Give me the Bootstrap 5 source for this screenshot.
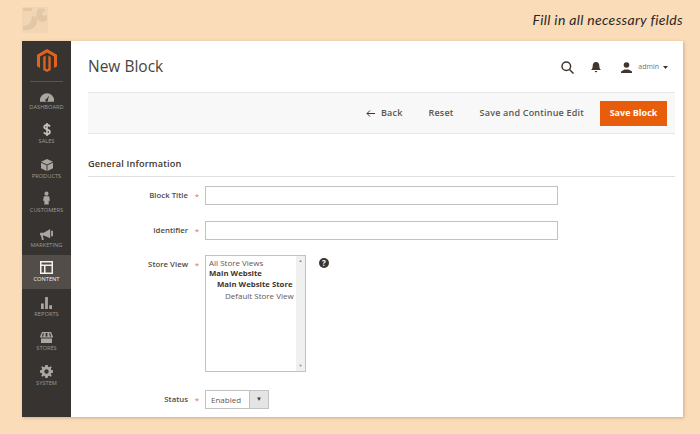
<!DOCTYPE html>
<html lang="en"><head><meta charset="utf-8"><title>New Block</title>
<link rel="stylesheet" href="https://cdn.jsdelivr.net/npm/bootstrap@5.3.0/dist/css/bootstrap.min.css">
<style>
html,body{height:434px;overflow:hidden}
body{background:#fadcb9;font-family:"Open Sans",sans-serif;color:#41362f;margin:0}
.topstrip{height:41px;padding:7px 17px 0 22px}
.wm{width:26px;height:26px;display:block}
.hand{font-family:"Lato",sans-serif;font-style:italic;font-size:14px;color:#2b2622;line-height:1;margin-top:6px;letter-spacing:.33px}
.appwin{margin-left:22px;width:661px;height:376px;background:#fff;box-shadow:1px 1px 3px rgba(120,90,50,.35)}
.side{width:49px;background:#373330;flex:none}
.brandbox{height:41px;padding-top:6px;margin:0 8px;border-bottom:1px solid #5a5551;text-align:center}
.navi{height:34.5px;color:#9f9b95;font-size:5.7px;line-height:8px;text-align:center;text-transform:uppercase;display:flex;flex-direction:column;align-items:center;justify-content:flex-end;padding-bottom:6px}
.navi svg{fill:#aaa6a0;margin-bottom:1px}
.navi.onn{background:#524d49;color:#f3f1ee}
.navi.onn svg{fill:#f3f1ee}
.mainp{padding:0 8px 0 17px;min-width:0}
.headrow{height:51px;padding-top:1px}
.pgtitle{font-size:15.5px;font-weight:400;color:#4a4340;margin:0;line-height:1}
.tools{padding-right:7px;font-size:7px;color:#7a716b}
.bell{margin:0 20px 0 17px}
.who{margin:0 4px 0 6px}
.actbar{height:42px;background:#f8f8f8;border-top:1px solid #e8e6e3;border-bottom:1px solid #e8e6e3;padding-right:8px;font-size:9px;font-weight:600;color:#5c5550;letter-spacing:.2px}
.backarr{margin-right:6px}
.gapact{margin-left:26px}
.savebtn{background:#e85d0c;color:#fff;width:67px;height:25px;border:0;border-radius:0;font-size:9px;font-weight:700;padding:0;margin-left:16px}
.secthead{font-size:9.2px;font-weight:600;margin:23px 0 0;padding-bottom:5px;border-bottom:1px solid #e1dfdc;line-height:14px;letter-spacing:.15px;color:#41362f}
.frow{display:flex;align-items:flex-start}
.rowa{margin-top:9px}.rowb{margin-top:16px}.rowc{margin-top:15px}.rowd{margin-top:18px}
.flbl{width:100px;text-align:right;font-size:7.8px;font-weight:600;color:#514a45;line-height:19px;flex:none}
.star{width:17px;height:19px;text-align:center;color:#e2705a;font-size:8px;line-height:19px;flex:none;padding-left:1px}
.finput{width:353px;height:19px;border:1px solid #c2c2c2;background:#fff}
.stores{width:101px;height:117px;border:1px solid #c2c2c2;font-size:8px;line-height:11px;padding:1px 0 0 3px;color:#5f5852;position:relative}
.stores b{font-weight:700;font-size:7.8px;color:#41362f;display:block}
.ind1{padding-left:8px}.ind2{padding-left:16px}
.scb{position:absolute;right:0;top:0;bottom:0;width:9px;background:#f0f0f0;color:#8a8a8a;font-size:4px;text-align:center;line-height:10px;display:flex;flex-direction:column;justify-content:space-between}
.hlp{width:10px;height:10px;border-radius:50%;background:#3a3532;color:#fff;font-size:8px;font-weight:700;text-align:center;line-height:10px;margin:3px 0 0 13px}
.seltxt{width:64px;height:19px;border:1px solid #c2c2c2;font-size:8px;line-height:17px;padding-left:5px;color:#5f5852;display:flex}
.selarr{margin-left:auto;width:19px;background:#e4e4e4;border-left:1px solid #c2c2c2;color:#41362f;font-size:6px;text-align:center;line-height:17px}
</style></head><body>
<div class="topstrip d-flex justify-content-between align-items-start">
<svg class="wm" viewBox="0 0 26 26"><rect width="26" height="26" fill="#f2d6b3"/><path d="M1 1h9v3H1zM10 9l5 1c1 5-1 12-9 13H1v-4c4 0 8-2 9-10z" fill="#e2c8a6"/><path d="M16 2c3-1 6 0 8 1l-4 3 1 3 4-1v5c-3 3-7 2-9 0-2-4-2-8 0-11z" fill="#e2c8a6"/></svg>
<div class="hand">Fill in all necessary fields</div>
</div>
<div class="appwin d-flex">
<nav class="side">
<div class="brandbox"><svg width="20" height="23" viewBox="0 0 20 23"><path d="M10 0 20 5.700V17.300L17 19V7.500L10 3.500 3 7.500V19L0 17.300V5.700Z" fill="#e2631e"/><path d="M10 23 6.300 21V7.900L8.600 6.600V19.600L10 20.400 11.400 19.600V6.600L13.700 7.900V21Z" fill="#e2631e"/></svg></div>
<div class="navi"><svg width="14" height="9" viewBox="0 0 18 11"><path d="M9 0a9 9 0 0 1 9 9v2H0V9a9 9 0 0 1 9-9zm3 3L8.500 7a1.800 1.800 0 1 0 1.700 1z"/></svg>Dashboard</div>
<div class="navi"><svg width="8" height="13" viewBox="0 0 8 13"><path d="M7 3.500C6.500 2.500 5.300 2 4 2 2.300 2 1.200 2.800 1.200 4.100 1.200 7 6.900 5.800 6.900 8.900 6.900 10.200 5.700 11 4 11 2.600 11 1.300 10.400.8 9.400" fill="none" stroke="#c6c2bd" stroke-width="1.800"/><path d="M3.200 0h1.600v13H3.200z" fill="#c6c2bd"/></svg>Sales</div>
<div class="navi"><svg width="12" height="12" viewBox="0 0 13 13"><path d="M6.500 0 13 3 6.500 6 0 3zM0 4l6 2.800V13L0 10zM13 4 7 6.800V13l6-3z"/></svg>Products</div>
<div class="navi"><svg width="7" height="14" viewBox="0 0 8 15"><circle cx="4" cy="2.500" r="2.300"/><path d="M1 5.500h6l1 5H6.500V15h-5v-4.500H0z"/></svg>Customers</div>
<div class="navi"><svg width="13" height="11" viewBox="0 0 14 12"><path d="M0 4h4L11 0v10L4 7H3l1 5H2L1 7H0zM12 2h2v6h-2z"/></svg>Marketing</div>
<div class="navi onn"><svg width="13" height="13" viewBox="0 0 13 13"><path fill-rule="evenodd" d="M0 0h13v13H0zM1.500 1.500V3.500h10V1.500zM1.500 5v6.500H4V5zM5.500 5v6.500h6V5z"/></svg>Content</div>
<div class="navi"><svg width="11" height="12" viewBox="0 0 12 13"><path d="M0 7h3v6H0zM4.500 0h3v13h-3zM9 9h3v4H9z"/></svg>Reports</div>
<div class="navi"><svg width="13" height="11" viewBox="0 0 14 12"><path fill-rule="evenodd" d="M2 0h10l2 5v1H0V5zM3 1 2 5h1.500L4 1zM6 1v4h2V1zM10 1l.5 4H12l-1-4zM1 7h12v5H1z"/></svg>Stores</div>
<div class="navi"><svg width="13" height="13" viewBox="0 0 13 13"><path fill-rule="evenodd" d="M5.300 0h2.400l.3 1.800 1.200.5L10.700 1.200l1.100 1.100-1 1.500.5 1.200 1.700.3v2.400l-1.700.3-.5 1.200 1 1.500-1.100 1.100-1.500-1-1.200.5-.3 1.700H5.300L5 11.300l-1.200-.5-1.500 1-1.100-1.100 1-1.500-.5-1.200L0 7.700V5.300L1.700 5l.5-1.200-1-1.500 1.100-1.100 1.500 1L5 1.800zM6.500 4.300a2.200 2.200 0 1 0 0 4.400 2.200 2.200 0 0 0 0-4.400z"/></svg>System</div>
</nav>
<main class="mainp flex-grow-1">
<div class="headrow d-flex justify-content-between align-items-center">
<h1 class="pgtitle">New Block</h1>
<div class="tools d-flex align-items-center">
<svg width="13" height="13" viewBox="0 0 13 13" fill="none" stroke="#41362f" stroke-width="1.500"><circle cx="5.300" cy="5.300" r="4.300"/><path d="M8.500 8.500 12.500 12.500"/></svg>
<svg class="bell" width="10" height="11" viewBox="0 0 10 11" fill="#41362f"><path d="M5 0c2.500 0 3.300 2 3.300 4 0 2 .7 3 1.700 4H0c1-1 1.700-2 1.700-4C1.700 2 2.500 0 5 0zM3.700 9h2.600a1.300 1.300 0 0 1-2.600 0z"/></svg>
<svg width="11" height="11" viewBox="0 0 11 11" fill="#41362f"><circle cx="5.500" cy="3" r="2.800"/><path d="M0 11V9.500L3.500 7.500h4L11 9.500V11z"/></svg>
<span class="who">admin</span>
<svg width="5" height="3" viewBox="0 0 5 3" fill="#41362f"><path d="M0 0h5L2.500 3z"/></svg>
</div>
</div>
<div class="actbar d-flex justify-content-end align-items-center">
<span><svg class="backarr" width="9" height="7" viewBox="0 0 9 7" fill="none" stroke="#41362f" stroke-width="1"><path d="M9 3.500H1M4 .5l-3 3 3 3"/></svg>Back</span>
<span class="gapact">Reset</span>
<span class="gapact">Save and Continue Edit</span>
<button class="btn savebtn" type="button">Save Block</button>
</div>
<h2 class="secthead">General Information</h2>
<div class="frow rowa"><div class="flbl">Block Title</div><div class="star">*</div><div class="finput"></div></div>
<div class="frow rowb"><div class="flbl">Identifier</div><div class="star">*</div><div class="finput"></div></div>
<div class="frow rowc"><div class="flbl">Store View</div><div class="star">*</div>
<div class="stores">All Store Views<b>Main Website</b><b class="ind1">Main Website Store</b><div class="ind2">Default Store View</div><div class="scb"><span>▲</span><span>▼</span></div></div>
<div class="hlp">?</div></div>
<div class="frow rowd"><div class="flbl">Status</div><div class="star">*</div><div class="seltxt">Enabled<span class="selarr">▼</span></div></div>
</main>
</div>
</body></html>
